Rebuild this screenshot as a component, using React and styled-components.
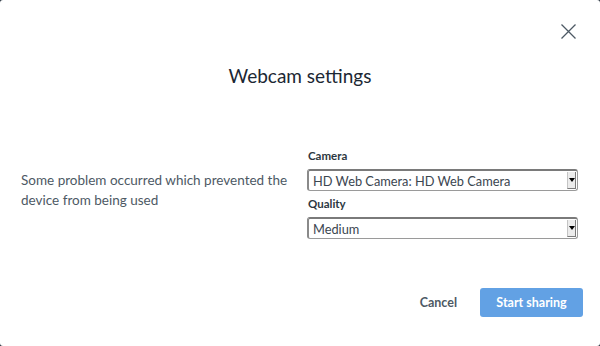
import React from 'react';
import styled, { createGlobalStyle } from 'styled-components';

const GlobalStyle = createGlobalStyle`
  html, body {
    margin: 0;
    padding: 0;
    background: #2b3640;
  }
  body {
    font-family: Lato, "Liberation Sans", sans-serif;
  }
`;

const Dialog = styled.div`
  width: 600px;
  height: 346px;
  box-sizing: border-box;
  background: #ffffff;
  border-radius: 3px;
  display: flex;
  flex-direction: column;
  position: relative;
`;

const CloseButton = styled.button`
  position: absolute;
  top: 21px;
  right: 22px;
  width: 20px;
  height: 20px;
  padding: 0;
  border: none;
  background: transparent;
  display: flex;
  align-items: center;
  justify-content: center;
  cursor: pointer;
`;

const Title = styled.h2`
  margin: 64px 0 0;
  text-align: center;
  font-size: 19px;
  font-weight: 400;
  line-height: 24px;
  color: #1c2733;
`;

const Body = styled.div`
  display: grid;
  grid-template-columns: 286px 271px;
  align-items: start;
  padding: 60px 0 0 21px;
`;

const Message = styled.p`
  margin: 22px 0 0;
  font-size: 13.5px;
  line-height: 20px;
  color: #4d5964;
`;

const Fields = styled.div`
  display: flex;
  flex-direction: column;
`;

const Label = styled.label`
  font-size: 11.5px;
  font-weight: 700;
  line-height: 16px;
  color: #2c3741;
  padding-left: 1px;
  margin-bottom: 5px;
`;

const SelectBox = styled.div`
  height: 22px;
  box-sizing: border-box;
  border: 1px solid #9a9a9a;
  border-top: 2px solid #7a7a7a;
  border-left: 2px solid #8a8a8a;
  border-radius: 3px;
  background: #fff;
  display: flex;
  align-items: center;
  margin-bottom: ${(p) => (p.$last ? 0 : 5)}px;
`;

const SelectText = styled.span`
  flex: 1;
  padding-left: 4px;
  font-size: 12.8px;
  color: #3b4650;
  line-height: 18px;
`;

const Arrow = styled.span`
  width: 9px;
  height: 17px;
  margin-right: 1px;
  box-sizing: border-box;
  background: #ececec;
  border-left: 1px solid #c4c4c4;
  border-right: 1px solid #7c7c7c;
  border-bottom: 1px solid #7c7c7c;
  display: flex;
  align-items: center;
  justify-content: center;

  &::after {
    content: '';
    border-left: 3px solid transparent;
    border-right: 3px solid transparent;
    border-top: 4px solid #000;
  }
`;

const Footer = styled.div`
  margin-top: auto;
  display: flex;
  justify-content: flex-end;
  align-items: center;
  gap: 23px;
  padding: 0 17px 29px 0;
`;

const TextButton = styled.button`
  border: none;
  background: transparent;
  font-family: inherit;
  font-size: 12.5px;
  font-weight: 700;
  color: #4d5964;
  padding: 0;
  cursor: pointer;
`;

const PrimaryButton = styled.button`
  width: 103px;
  height: 29px;
  border: none;
  border-radius: 3px;
  background: #62a1e4;
  color: #ffffff;
  font-family: inherit;
  font-size: 12.5px;
  font-weight: 700;
  cursor: pointer;
`;

const Select = ({ value, last }) => (
  <SelectBox $last={last}>
    <SelectText>{value}</SelectText>
    <Arrow />
  </SelectBox>
);

export default function App() {
  return (
    <>
      <GlobalStyle />
      <Dialog>
        <CloseButton aria-label="Close">
          <svg width="17" height="17" viewBox="0 0 17 17">
            <path d="M1.5 1.5 L15.5 15.5 M15.5 1.5 L1.5 15.5" stroke="#4d5964" strokeWidth="1.3" fill="none" />
          </svg>
        </CloseButton>
        <Title>Webcam settings</Title>
        <Body>
          <Message>
            Some problem occurred which prevented the device from being used
          </Message>
          <Fields>
            <Label>Camera</Label>
            <Select value="HD Web Camera: HD Web Camera" />
            <Label>Quality</Label>
            <Select value="Medium" last />
          </Fields>
        </Body>
        <Footer>
          <TextButton>Cancel</TextButton>
          <PrimaryButton>Start sharing</PrimaryButton>
        </Footer>
      </Dialog>
    </>
  );
}
